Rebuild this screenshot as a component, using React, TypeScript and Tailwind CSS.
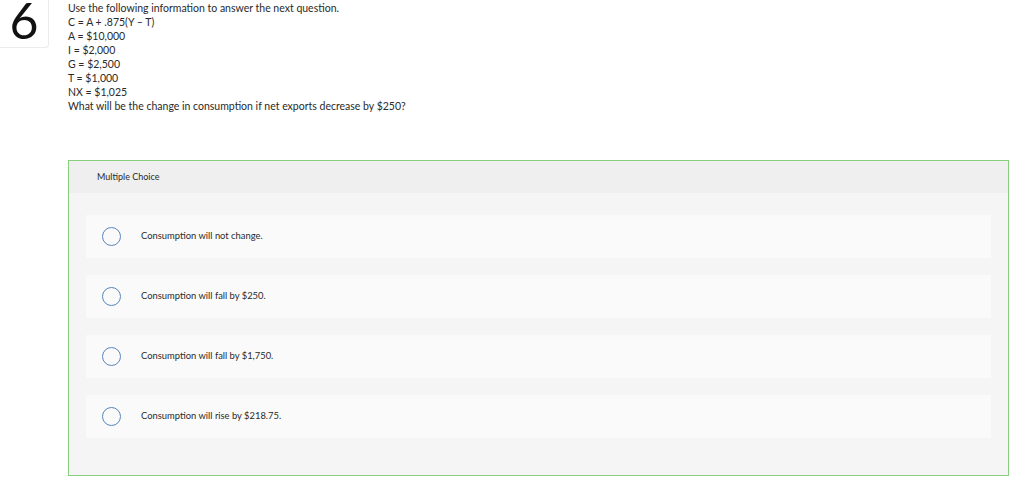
import React from "react";

const options = [
  "Consumption will not change.",
  "Consumption will fall by $250.",
  "Consumption will fall by $1,750.",
  "Consumption will rise by $218.75.",
];

const lines = [
  "C = A + .875(Y \u2013 T)",
  "A = $10,000",
  "I = $2,000",
  "G = $2,500",
  "T = $1,000",
  "NX = $1,025",
];

export default function App() {
  return (
    <div className="w-[1024px] h-[480px] bg-white overflow-hidden text-[#2a2a2a]" style={{ fontFamily: "Lato, 'Open Sans', sans-serif" }}>
      <div className="flex">
        <div className="w-[49px] h-[48px] shrink-0 border-r border-b border-[#ececec] rounded-br-[4px] flex items-start justify-center">
          <span className="text-[50px] font-normal leading-[40px] text-[#111]">6</span>
        </div>
        <div className="ml-[19px] pt-[1px] text-[10.5px] leading-[14px]">
          <p>Use the following information to answer the next question.</p>
          {lines.map((l) => (
            <p key={l}>{l}</p>
          ))}
          <p>What will be the change in consumption if net exports decrease by $250?</p>
        </div>
      </div>
      <div className="ml-[68px] mt-[47px] w-[941px] h-[316px] border border-[#86d07d] bg-[#f5f5f5] flex flex-col">
        <div className="h-[32px] bg-[#efefef] flex items-center pl-[28px] text-[9px] text-[#2a2a2a]">Multiple Choice</div>
        <div className="flex flex-col gap-[17px] px-[17px] pt-[22px]">
          {options.map((o) => (
            <div key={o} className="h-[43px] bg-[#fafafa] flex items-center pl-[16px]">
              <span className="w-[19px] h-[19px] rounded-full border border-[#5a86bb] shrink-0" />
              <span className="ml-[20px] text-[9.4px] text-[#2a2a2a]">{o}</span>
            </div>
          ))}
        </div>
      </div>
    </div>
  );
}
